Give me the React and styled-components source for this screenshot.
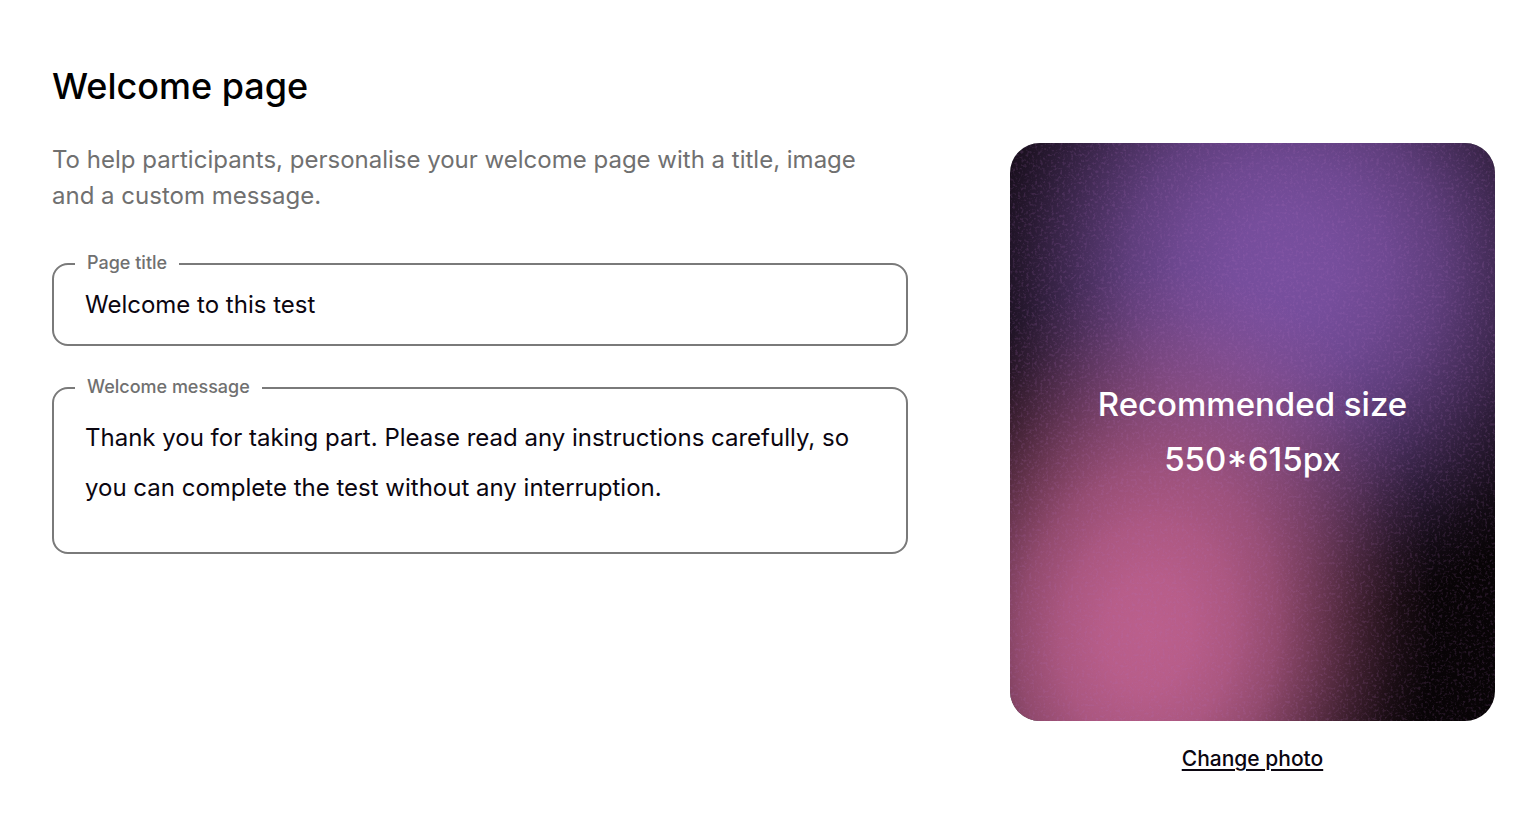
import React, { useState } from 'react'
import styled, { createGlobalStyle } from 'styled-components'

const fontFamily = 'Inter, "Liberation Sans", sans-serif'
const textColor = '#0b0610'
const mutedColor = '#707070'
const borderColor = '#7a7a7a'

const App = () => {
  const [title, setTitle] = useState('Welcome to this test')
  const [message, setMessage] = useState(
    'Thank you for taking part. Please read any instructions carefully, so you can complete the test without any interruption.'
  )

  return (
    <>
      <GlobalStyle />
      <PageLayout>
        <FormColumn>
          <Heading>Welcome page</Heading>
          <Intro>
            To help participants, personalise your welcome page with a title, image and a custom message.
          </Intro>
          <Field>
            <FieldLegend>
              <label htmlFor="page-title">Page title</label>
            </FieldLegend>
            <TextInput
              id="page-title"
              type="text"
              value={title}
              onChange={e => setTitle(e.target.value)}
            />
          </Field>
          <Field>
            <FieldLegend>
              <label htmlFor="welcome-message">Welcome message</label>
            </FieldLegend>
            <TextArea
              id="welcome-message"
              rows={2}
              value={message}
              onChange={e => setMessage(e.target.value)}
            />
          </Field>
        </FormColumn>

        <PhotoColumn>
          <Photo>
            <Artwork />
            <PhotoHint>
              Recommended size
              <br />
              550*615px
            </PhotoHint>
          </Photo>
          <ChangeButton type="button">Change photo</ChangeButton>
        </PhotoColumn>
      </PageLayout>
    </>
  )
}

// soft bell-shaped falloff shared by both glows
const glowStops = [
  [0, 1],
  [0.15, 0.98],
  [0.3, 0.91],
  [0.45, 0.77],
  [0.6, 0.54],
  [0.75, 0.29],
  [0.88, 0.1],
  [1, 0]
]

const Glow = ({ id, color }) => (
  <radialGradient id={id}>
    {glowStops.map(([offset, opacity]) => (
      <stop key={offset} offset={offset} stopColor={color} stopOpacity={opacity} />
    ))}
  </radialGradient>
)

const Artwork = () => (
  <ArtworkSvg viewBox="0 0 485 578" preserveAspectRatio="none" aria-hidden="true">
    <defs>
      <Glow id="purple-glow" color="#784f9f" />
      <Glow id="pink-glow" color="#bb5f8c" />
      <filter id="grain" x="0" y="0" width="100%" height="100%" colorInterpolationFilters="sRGB">
        <feTurbulence type="fractalNoise" baseFrequency="0.36" numOctaves="2" seed="4" />
        <feColorMatrix
          values="0 0 0 0 0.7
                  0 0 0 0 0.45
                  0 0 0 0 0.75
                  4 0 0 0 -2"
        />
      </filter>
    </defs>
    <rect width="485" height="578" fill="#080406" />
    <ellipse cx="275" cy="125" rx="345" ry="355" fill="url(#purple-glow)" />
    <ellipse
      cx="138"
      cy="490"
      rx="285"
      ry="365"
      fill="url(#pink-glow)"
      transform="rotate(8 138 490)"
    />
    <rect width="485" height="578" filter="url(#grain)" opacity="0.17" />
  </ArtworkSvg>
)

const GlobalStyle = createGlobalStyle`
  *, *::before, *::after {
    box-sizing: border-box;
  }
  body {
    margin: 0;
    background: #fff;
    color: ${textColor};
    font-family: ${fontFamily};
  }
`

const PageLayout = styled.main`
  display: grid;
  grid-template-columns: 30fr 17fr;
  column-gap: 102px;
  align-items: start;
  padding: 62px 41px 40px 52px;
`

const FormColumn = styled.section`
  display: flex;
  flex-direction: column;
  min-width: 0;
`

const Heading = styled.h1`
  margin: 0 0 32px;
  color: #000;
  font-size: 36px;
  font-weight: 500;
  line-height: 48px;
`

const Intro = styled.p`
  margin: 0 0 39px;
  padding-right: 32px;
  color: ${mutedColor};
  font-size: 24px;
  line-height: 36px;
`

const Field = styled.fieldset`
  min-width: 0;
  margin: 0 0 31px;
  padding: 0 31px;
  border: 2px solid ${borderColor};
  border-radius: 16px;
`

const FieldLegend = styled.legend`
  margin-left: -10px;
  padding: 0 12px 2px;
  color: ${mutedColor};
  font-size: 18px;
  font-weight: 500;
  line-height: 20px;
`

const TextInput = styled.input`
  display: block;
  width: 100%;
  height: 69px;
  padding: 0 0 10px;
  border: 0;
  outline: 0;
  background: transparent;
  color: inherit;
  font: 400 24px/50px ${fontFamily};
`

const TextArea = styled.textarea`
  display: block;
  width: 100%;
  height: 153px;
  padding: 14px 0 0;
  border: 0;
  outline: 0;
  background: transparent;
  color: inherit;
  font: 400 24px/50px ${fontFamily};
  resize: none;
`

const PhotoColumn = styled.aside`
  display: flex;
  flex-direction: column;
  align-items: center;
  gap: 22px;
  padding-top: 81px;
`

const Photo = styled.div`
  display: grid;
  place-items: center;
  width: 100%;
  aspect-ratio: 485 / 578;
  overflow: hidden;
  border-radius: 30px;

  > * {
    grid-area: 1 / 1;
  }
`

const ArtworkSvg = styled.svg`
  display: block;
  width: 100%;
  height: 100%;
`

const PhotoHint = styled.p`
  z-index: 1;
  margin: 0;
  color: #fff;
  font-size: 33px;
  font-weight: 500;
  line-height: 55px;
  text-align: center;
`

const ChangeButton = styled.button`
  padding: 0;
  border: 0;
  background: transparent;
  color: ${textColor};
  font: 500 21px/32px ${fontFamily};
  text-decoration: underline;
  text-underline-offset: 3px;
  cursor: pointer;
`

export default App
